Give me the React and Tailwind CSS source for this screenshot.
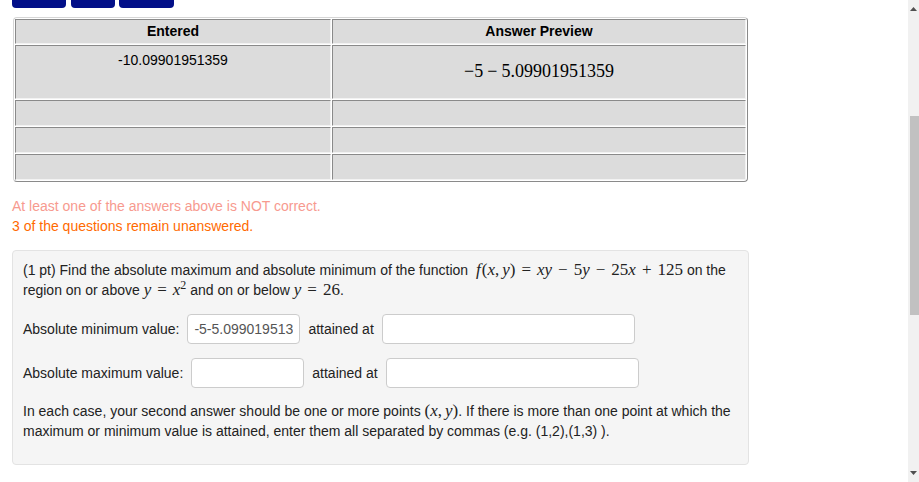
const sans = "font-['Liberation_Sans',Arial,sans-serif]"

function M({ children, size = 'text-[17px]' }) {
  return <span className={`font-['Liberation_Serif','Times_New_Roman',serif] ${size} leading-none`}>{children}</span>
}

function Op({ children }) {
  return <span className="mx-[6px]">{children}</span>
}

function Cell({ children, className = '', top = false }) {
  return (
    <td
      className={
        'bg-[#dcdcdc] border border-t-[#8a8a8a] border-l-[#8a8a8a] border-r-[#f2f2f2] border-b-[#f2f2f2] p-0 text-center ' +
        (top ? 'align-top ' : 'align-middle ') +
        className
      }
    >
      {children}
    </td>
  )
}

function Scrollbar() {
  return (
    <div className="flex h-[482px] w-[11px] flex-col bg-[#f1f1f1]">
      <div className="flex h-[116px] justify-center pt-[7px]">
        <svg width="7" height="4" viewBox="0 0 7 4">
          <path d="M0 4 L3.5 0 L7 4 Z" fill="#505050" />
        </svg>
      </div>
      <div className="ml-[2px] h-[199px] bg-[#c1c1c1]" />
      <div className="flex flex-1 items-end justify-center pb-[7px]">
        <svg width="7" height="4" viewBox="0 0 7 4">
          <path d="M0 0 L7 0 L3.5 4 Z" fill="#505050" />
        </svg>
      </div>
    </div>
  )
}

export default function App() {
  return (
    <div className={`flex h-[482px] w-[919px] overflow-hidden bg-white text-[14px] text-[#222] ${sans}`}>
      <div className="flex-1">
        <div className="flex gap-[4px] pl-[12px]">
          <div className="h-[8px] w-[54px] rounded-b-[4px] bg-[#020f88]" />
          <div className="ml-[1px] h-[8px] w-[44px] rounded-b-[4px] bg-[#020f88]" />
          <div className="h-[8px] w-[55px] rounded-b-[4px] bg-[#020f88]" />
        </div>

        <table className="ml-[13px] mt-[9px] border-separate border-spacing-[1px] rounded-[4px] border border-t-[#d6d6d6] border-l-[#d6d6d6] border-r-[#8a8a8a] border-b-[#8a8a8a]">
          <tbody>
            <tr>
              <Cell className="h-[25px] w-[316px] font-bold text-black">Entered</Cell>
              <Cell className="h-[25px] w-[414px] font-bold text-black">Answer Preview</Cell>
            </tr>
            <tr>
              <Cell top className="h-[54px] pt-[4px] text-black">-10.09901951359</Cell>
              <Cell className="h-[54px] text-black">
                <M size="text-[18px]">
                  −5<span className="mx-[4px]">−</span>5.09901951359
                </M>
              </Cell>
            </tr>
            <tr>
              <Cell className="h-[26px]" />
              <Cell className="h-[26px]" />
            </tr>
            <tr>
              <Cell className="h-[26px]" />
              <Cell className="h-[26px]" />
            </tr>
            <tr>
              <Cell className="h-[26px]" />
              <Cell className="h-[26px]" />
            </tr>
          </tbody>
        </table>

        <div className="ml-[12px] mt-[14px] leading-5">
          <div className="text-[#f79a8f]">At least one of the answers above is NOT correct.</div>
          <div className="text-[#ff6a00]">3 of the questions remain unanswered.</div>
        </div>

        <div className="ml-[12px] mt-[14px] w-[737px] rounded-[4px] border border-[#e3e3e3] bg-[#f5f5f5] px-[10px] pb-[23px] pt-[9px]">
          <p className="whitespace-nowrap leading-5">
            (1 pt) Find the absolute maximum and absolute minimum of the function{' '}
            <M>
              <span className="ml-[4px]" />
              <i className="mr-[1px]">f</i>(<i>x</i>,<span className="mr-[3px]" /><i>y</i>)<Op>=</Op>
              <i>xy</i>
              <Op>−</Op>5<i>y</i>
              <Op>−</Op>25<i>x</i>
              <Op>+</Op>125
            </M>{' '}
            on the
            <br />
            region on or above{' '}
            <M>
              <i>y</i>
              <Op>=</Op>
              <i>x</i>
              <sup className="text-[12px]">2</sup>
            </M>{' '}
            and on or below{' '}
            <M>
              <i>y</i>
              <Op>=</Op>26
            </M>
            .
          </p>

          <div className="mt-[14px] flex items-center">
            <span>Absolute minimum value:</span>
            <input
              readOnly
              value="-5-5.099019513"
              className="ml-[8px] h-[30px] w-[113px] rounded-[4px] border border-[#ccc] bg-white px-[6px] text-[14px] text-[#555] outline-none"
            />
            <span className="ml-[8px]">attained at</span>
            <input
              readOnly
              value=""
              className="ml-[8px] h-[30px] w-[253px] rounded-[4px] border border-[#ccc] bg-white outline-none"
            />
          </div>

          <div className="mt-[14px] flex items-center">
            <span>Absolute maximum value:</span>
            <input
              readOnly
              value=""
              className="ml-[8px] h-[30px] w-[113px] rounded-[4px] border border-[#ccc] bg-white outline-none"
            />
            <span className="ml-[8px]">attained at</span>
            <input
              readOnly
              value=""
              className="ml-[8px] h-[30px] w-[253px] rounded-[4px] border border-[#ccc] bg-white outline-none"
            />
          </div>

          <p className="mt-[13px] whitespace-nowrap leading-5">
            In each case, your second answer should be one or more points{' '}
            <M>
              (<i>x</i>,<span className="mr-[3px]" /><i>y</i>)
            </M>
            . If there is more than one point at which the
            <br />
            maximum or minimum value is attained, enter them all separated by commas (e.g. (1,2),(1,3) ).
          </p>
        </div>
      </div>
      <Scrollbar />
    </div>
  )
}
